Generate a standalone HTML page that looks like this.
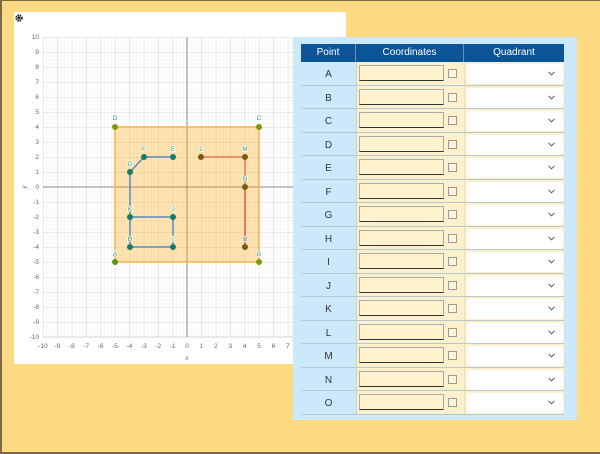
<!DOCTYPE html>
<html><head><meta charset="utf-8"><style>
*{margin:0;padding:0;box-sizing:border-box}
body{width:600px;height:454px;overflow:hidden;background:#fedb82;font-family:"Liberation Sans",sans-serif;position:relative}
.frame{position:absolute;left:0;top:0;width:600px;height:454px;border:2px solid #7a6a45;border-right:none;border-top-width:1px}
.wp{position:absolute;left:14px;top:12px;width:332px;height:352px;background:#fff}
.bp{position:absolute;left:293px;top:37px;width:284px;height:383px;background:#cce9fb}
.tbl{position:absolute;left:301px;top:44px;width:263px;height:371px;}
.hd{position:absolute;top:0;height:18px;background:#0d5497;color:#fff;font-size:10px;text-align:center;line-height:18px;border-right:1px solid #6d8fb5}
.row{position:absolute;left:0;width:263px;height:23.5px;border-bottom:1px solid #b9c7cf}
.pc{position:absolute;left:0;top:0;width:55px;height:100%;background:#cce9fb;font-size:10px;color:#333;text-align:center;line-height:26px}
.cc{position:absolute;left:55px;top:0;width:108px;height:100%;background:#fdf0cc;border-left:1px solid #d8d0b5}
.qc{position:absolute;left:163px;top:0;width:100px;height:100%;background:#fdf0cc;border-left:1px solid #e8dfc3}
.inp{position:absolute;left:2px;top:3px;width:85px;height:16px;background:#fff2cc;border:1px solid #aaa;border-bottom:1px solid #333}
.cb{position:absolute;left:91px;top:7px;width:9px;height:9px;border:1px solid #999;background:#fdf4dc}
.sel{position:absolute;left:2px;top:2px;width:96px;height:20px;background:#fff;border-radius:3px}
.sel svg{position:absolute;right:8px;top:7px}
</style></head><body>
<div class="frame"></div>
<div class="wp">
<svg width="16" height="16" style="position:absolute;left:0;top:0" viewBox="0 0 16 16"><circle cx="5" cy="6" r="2.6" fill="none" stroke="#222" stroke-width="2.2" stroke-dasharray="1.4 0.7"/><circle cx="5" cy="6" r="1.2" fill="#222"/></svg>
</div>
<svg style="position:absolute;left:0;top:0" width="600" height="454">
<defs>
<pattern id="mn" x="43" y="37" width="3.6" height="3.75" patternUnits="userSpaceOnUse"><path d="M0 0V3.75M0 0H3.6" stroke="#efefef" stroke-width="0.8" fill="none"/></pattern>
<pattern id="mj" x="43" y="37" width="14.4" height="15" patternUnits="userSpaceOnUse"><path d="M0 0V15M0 0H14.4" stroke="#d6d6d6" stroke-width="1" fill="none"/></pattern>
</defs>
<rect x="43" y="37" width="288" height="300" fill="url(#mn)"/>
<rect x="43" y="37" width="288" height="300" fill="url(#mj)"/>
<line x1="43" y1="337" x2="331" y2="337" stroke="#d6d6d6"/>
<line x1="187" y1="37" x2="187" y2="337" stroke="#888"/>
<line x1="43" y1="187" x2="331" y2="187" stroke="#888"/>
<rect x="115" y="127" width="144" height="135" fill="rgba(255,165,0,0.3)" stroke="#fbb04d" stroke-width="1.5"/>
<polyline points="173,157 144,157 130,172 130,247 173,247 173,217 130,217" fill="none" stroke="#5b86c5" stroke-width="1.5"/>
<polyline points="201,157 245,157 245,187" fill="none" stroke="#e8764e" stroke-width="1.5"/>
<line x1="245" y1="187" x2="245" y2="247" stroke="#e33" stroke-width="1.3"/>
<g fill="#7c9a0a"><circle cx="115" cy="127" r="3"/><circle cx="259" cy="127" r="3"/><circle cx="259" cy="262" r="3"/><circle cx="115" cy="262" r="3" fill="#4f9a14"/></g>
<g fill="#1a7a6a"><circle cx="173" cy="157" r="3"/><circle cx="144" cy="157" r="3"/><circle cx="130" cy="172" r="3"/><circle cx="130" cy="217" r="3"/><circle cx="173" cy="217" r="3"/><circle cx="130" cy="247" r="3"/><circle cx="173" cy="247" r="3"/></g>
<g fill="#7a5a10"><circle cx="201" cy="157" r="3"/><circle cx="245" cy="157" r="3"/><circle cx="245" cy="187" r="3"/><circle cx="245" cy="247" r="3"/></g>
<g font-size="6.5" fill="#3a9a5a" text-anchor="middle" stroke="#fff" stroke-width="1.5" paint-order="stroke">
<text x="115" y="120">D</text><text x="259" y="120">C</text><text x="115" y="256">A</text><text x="259" y="256">B</text>
<text x="144" y="151">F</text><text x="173" y="151">E</text><text x="130" y="166">G</text><text x="130" y="211">K</text><text x="173" y="211">J</text><text x="130" y="241">H</text><text x="173" y="241">I</text>
<text x="201" y="151">L</text><text x="245" y="151">M</text><text x="245" y="181">N</text><text x="245" y="241">O</text>
</g>
<g font-size="6.5" fill="#666" text-anchor="end">
<text x="39" y="39">10</text><text x="39" y="54">9</text><text x="39" y="69">8</text><text x="39" y="84">7</text><text x="39" y="99">6</text><text x="39" y="114">5</text><text x="39" y="129">4</text><text x="39" y="144">3</text><text x="39" y="159">2</text><text x="39" y="174">1</text><text x="39" y="189">0</text><text x="39" y="204">-1</text><text x="39" y="219">-2</text><text x="39" y="234">-3</text><text x="39" y="249">-4</text><text x="39" y="264">-5</text><text x="39" y="279">-6</text><text x="39" y="294">-7</text><text x="39" y="309">-8</text><text x="39" y="324">-9</text><text x="39" y="339">-10</text>
</g>
<g font-size="6.5" fill="#666" text-anchor="middle">
<text x="43" y="348">-10</text><text x="57.4" y="348">-9</text><text x="71.8" y="348">-8</text><text x="86.2" y="348">-7</text><text x="100.6" y="348">-6</text><text x="115" y="348">-5</text><text x="129.4" y="348">-4</text><text x="143.8" y="348">-3</text><text x="158.2" y="348">-2</text><text x="172.6" y="348">-1</text><text x="187" y="348">0</text><text x="201.4" y="348">1</text><text x="215.8" y="348">2</text><text x="230.2" y="348">3</text><text x="244.6" y="348">4</text><text x="259" y="348">5</text><text x="273.4" y="348">6</text><text x="287.8" y="348">7</text>
<text x="187" y="360" font-style="italic">x</text>
<text x="24" y="189" transform="rotate(-90 24 187)" font-style="italic">y</text>
</g>
</svg>
<div class="bp"></div>
<div class="tbl">
<div class="hd" style="left:0;width:55px">Point</div>
<div class="hd" style="left:55px;width:108px">Coordinates</div>
<div class="hd" style="left:163px;width:100px;border-right:none">Quadrant</div>
<div id="rows"></div>
</div>
<script>
var L="ABCDEFGHIJKLMNO",h="";
for(var i=0;i<15;i++){h+='<div class="row" style="top:'+(18+i*23.5)+'px"><div class="pc">'+L[i]+'</div><div class="cc"><div class="inp"></div><div class="cb"></div></div><div class="qc"><div class="sel"><svg width="7" height="5" viewBox="0 0 7 5"><path d="M0.5 0.8L3.5 3.8L6.5 0.8" fill="none" stroke="#555" stroke-width="1"/></svg></div></div></div>';}
document.getElementById("rows").outerHTML=h;
</script>
</body></html>
